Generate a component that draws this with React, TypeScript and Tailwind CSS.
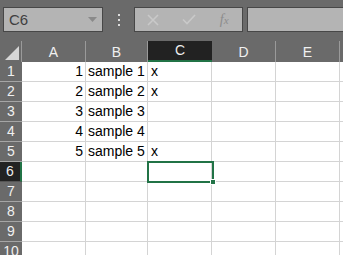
import React from "react";

const cols = [
  { l: "A", w: 64 },
  { l: "B", w: 62 },
  { l: "C", w: 64 },
  { l: "D", w: 64 },
  { l: "E", w: 64 },
];

const data: Record<number, string[]> = {
  1: ["1", "sample 1", "x"],
  2: ["2", "sample 2", "x"],
  3: ["3", "sample 3", ""],
  4: ["4", "sample 4", ""],
  5: ["5", "sample 5", "x"],
};

export default function App() {
  const rows = [1, 2, 3, 4, 5, 6, 7, 8, 9, 10];
  return (
    <div
      className="w-[343px] h-[255px] overflow-hidden bg-[#6a6a6a] relative"
      style={{ fontFamily: '"Liberation Sans", Arial, sans-serif' }}
    >
      {/* formula bar */}
      <div className="h-[41px] flex items-start pt-[7px]">
        <div className="ml-[3px] w-[100px] h-[25px] bg-[#b4b4b4] border border-[#474747] flex items-center justify-between pl-[5px] pr-[5px]">
          <span className="text-[15px] text-[#404040] leading-none">C6</span>
          <svg width="9" height="5" viewBox="0 0 9 5">
            <path d="M0 0 L9 0 L4.5 5 Z" fill="#8a8a8a" />
          </svg>
        </div>
        <div className="w-[31px] h-[25px] flex flex-col items-center justify-center gap-[3px]">
          <div className="w-[2px] h-[2px] bg-[#dcdcdc]" />
          <div className="w-[2px] h-[2px] bg-[#dcdcdc]" />
          <div className="w-[2px] h-[2px] bg-[#dcdcdc]" />
        </div>
        <div className="w-[109px] h-[25px] bg-[#b4b4b4] border border-[#474747] flex items-center">
          <div className="w-[36px] flex justify-center">
            <svg width="12" height="12" viewBox="0 0 12 12">
              <path d="M1 1 L11 11 M11 1 L1 11" stroke="#c9c9c9" strokeWidth="1.6" />
            </svg>
          </div>
          <div className="w-[36px] flex justify-center">
            <svg width="14" height="11" viewBox="0 0 14 11">
              <path d="M1 5.5 L5 9.5 L13 1" stroke="#c9c9c9" strokeWidth="1.6" fill="none" />
            </svg>
          </div>
          <div className="w-[36px] flex justify-center">
            <span
              className="text-[14px] italic text-[#8c8c8c] leading-none"
              style={{ fontFamily: '"Liberation Serif", "Times New Roman", serif' }}
            >
              f<span className="text-[11px]">x</span>
            </span>
          </div>
        </div>
        <div className="ml-[4px] flex-1 h-[25px] bg-[#b4b4b4] border border-[#474747] border-r-0" />
      </div>

      {/* column header row */}
      <div className="flex h-[21px]">
        <div className="w-[22px] h-full border-r border-[#9a9a9a] relative">
          <svg width="14" height="14" viewBox="0 0 14 14" className="absolute right-[2px] bottom-[2px]">
            <path d="M14 0 L14 14 L0 14 Z" fill="#d6d6d6" />
          </svg>
        </div>
        {cols.map((c) =>
          c.l === "C" ? (
            <div
              key={c.l}
              style={{ width: c.w }}
              className="h-full bg-[#222222] border-b-2 border-[#217346] text-[#ededed] text-[14px] flex items-center justify-center"
            >
              {c.l}
            </div>
          ) : (
            <div
              key={c.l}
              style={{ width: c.w }}
              className="h-full border-r border-[#9a9a9a] text-[#f0f0f0] text-[14px] flex items-center justify-center pt-[1px]"
            >
              {c.l}
            </div>
          )
        )}
      </div>

      {/* rows */}
      {rows.map((r) => {
        const d = data[r] || ["", "", ""];
        const sel = r === 6;
        return (
          <div key={r} className="flex h-[20px]">
            <div
              className={
                sel
                  ? "w-[22px] h-full bg-[#222222] border-r-2 border-[#217346] text-[#ededed] text-[14px] flex items-center justify-center border-b border-b-[#555]"
                  : "w-[22px] h-full border-b border-[#a5a5a5] text-[#f0f0f0] text-[14px] flex items-center justify-center"
              }
            >
              {r}
            </div>
            <div className="flex-1 flex bg-white">
              <div className="w-[64px] h-full border-r border-b border-[#d4d4d4] text-[14px] text-black flex items-center justify-end pr-[2px]">
                {d[0]}
              </div>
              <div className="w-[62px] h-full border-r border-b border-[#d4d4d4] text-[14px] text-black flex items-center pl-[2px]">
                {d[1]}
              </div>
              <div className="w-[64px] h-full border-r border-b border-[#d4d4d4] text-[14px] text-black flex items-center pl-[3px]">
                {d[2]}
              </div>
              <div className="w-[64px] h-full border-r border-b border-[#d4d4d4]" />
              <div className="w-[64px] h-full border-r border-b border-[#d4d4d4]" />
              <div className="flex-1 h-full border-b border-[#d4d4d4]" />
            </div>
          </div>
        );
      })}

      {/* selection */}
      <div className="absolute left-[147px] top-[161px] w-[67px] h-[22px] border-2 border-[#217346]" />
      <div className="absolute left-[210px] top-[179px] w-[6px] h-[6px] bg-[#217346] border border-white" />
    </div>
  );
}
